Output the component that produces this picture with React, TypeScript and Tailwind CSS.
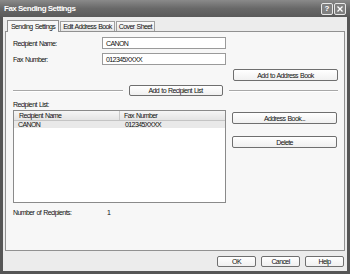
const font = {
  fontFamily: '"Liberation Sans", Arial, sans-serif',
};

const txt = "text-[7px] leading-none tracking-[-0.6px] [word-spacing:0.8px] text-[#111]";

const Button = ({ label, className = "" }: { label: string; className?: string }) => (
  <div
    className={`flex items-center justify-center rounded-[2px] border border-[#6f6f6f] bg-gradient-to-b from-[#ffffff] to-[#f0f0f0] ${txt} ${className}`}
  >
    {label}
  </div>
);

const Field = ({ label, value, first }: { label: string; value: string; first?: boolean }) => (
  <div className={`flex items-center ${first ? "" : "mt-[4px]"}`}>
    <div className={`w-[89px] ${txt}`}>{label}</div>
    <div className={`flex h-[12px] w-[124px] items-center border border-[#9a9a9a] bg-white pl-[3px] ${txt}`}>
      {value}
    </div>
  </div>
);

const Etched = () => (
  <div className="flex-1">
    <div className="h-px bg-[#a8a8a8]" />
    <div className="h-px bg-white" />
  </div>
);

const tabs = ["Sending Settings", "Edit Address Book", "Cover Sheet"];

export default function App() {
  return (
    <div className="flex h-[274px] w-[350px] flex-col bg-[#565656]" style={font}>
      {/* title bar */}
      <div className="flex h-[17px] items-center bg-gradient-to-b from-[#8a8a8a] via-[#686868] to-[#5a5a5a] pl-[4px] pr-[4px]">
        <span className="flex-1 text-[8px] font-bold leading-none tracking-[-0.5px] text-white">
          Fax Sending Settings
        </span>
        <div className="flex gap-[1px]">
          <div className="flex h-[12px] w-[12px] items-center justify-center rounded-[2px] border border-[#e8e8e8] bg-[#808080] text-[8px] font-bold leading-none text-white">
            ?
          </div>
          <div className="flex h-[12px] w-[12px] items-center justify-center rounded-[2px] border border-[#e8e8e8] bg-[#808080]">
            <svg width="6" height="6" viewBox="0 0 6 6">
              <path d="M0.5 0.5 L5.5 5.5 M5.5 0.5 L0.5 5.5" stroke="white" strokeWidth="1.3" />
            </svg>
          </div>
        </div>
      </div>

      {/* client area */}
      <div className="mx-[3px] mb-[3px] flex flex-1 flex-col bg-[#ececec]">
        {/* tabs */}
        <div className="ml-[4px] mt-[3px] flex h-[11px] items-end">
          {tabs.map((t, i) => (
            <div
              key={t}
              className={
                i === 0
                  ? `relative z-10 -mb-px flex h-[12px] items-center border border-b-0 border-[#8f8f8f] bg-[#f7f7f7] px-[3px] ${txt}`
                  : `ml-px flex h-[10px] items-center border border-b-0 border-[#a0a0a0] bg-gradient-to-b from-[#fbfbfb] to-[#e6e6e6] px-[2px] ${txt}`
              }
            >
              {t}
            </div>
          ))}
        </div>

        {/* panel */}
        <div className="mx-[2px] flex h-[220px] flex-col border border-[#919191] bg-[#f7f7f7] pl-[7px] pr-[6px] pt-[5px]">
          <Field label="Recipient Name:" value="CANON" first />
          <Field label="Fax Number:" value="012345XXXX" />

          <div className="mt-[4px] flex justify-end">
            <Button label="Add to Address Book" className="h-[12px] w-[105px]" />
          </div>

          <div className="mt-[4px] flex items-center">
            <Etched />
            <Button label="Add to Recipient List" className="mx-[6px] h-[11px] w-[94px]" />
            <Etched />
          </div>

          <div className={`mt-[5px] ${txt}`}>Recipient List:</div>

          <div className="mt-[2px] flex">
            <div className="h-[93px] w-[213px] border border-[#8a8a8a] bg-white">
              <div className={`flex h-[10px] border-b border-[#c4c4c4] bg-gradient-to-b from-[#f6f6f6] to-[#e4e4e4] ${txt}`}>
                <div className="flex w-[106px] items-center border-r border-[#c8c8c8] pl-[5px]">Recipient Name</div>
                <div className="flex flex-1 items-center pl-[4px]">Fax Number</div>
              </div>
              <div className={`flex h-[7px] bg-[#e9e9e9] ${txt}`}>
                <div className="flex w-[106px] items-center pl-[4px]">CANON</div>
                <div className="flex flex-1 items-center pl-[5px]">012345XXXX</div>
              </div>
            </div>
            <div className="ml-[6px] flex w-[105px] flex-col">
              <Button label="Address Book..." className="mt-[2px] h-[12px]" />
              <Button label="Delete" className="mt-[12px] h-[12px]" />
            </div>
          </div>

          <div className={`mt-[6px] flex items-center ${txt}`}>
            <div className="w-[94px]">Number of Recipients:</div>
            <div>1</div>
          </div>
        </div>

        {/* bottom buttons */}
        <div className="mr-[3px] mt-[5px] flex justify-end gap-[5px]">
          <Button label="OK" className="h-[11px] w-[39px]" />
          <Button label="Cancel" className="h-[11px] w-[39px]" />
          <Button label="Help" className="h-[11px] w-[39px]" />
        </div>
      </div>
    </div>
  );
}
